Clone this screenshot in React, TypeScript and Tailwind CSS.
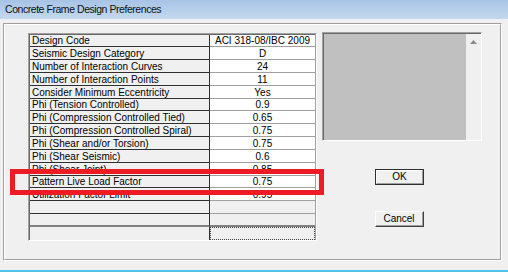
import React from "react";

const rows: [string, string][] = [
  ["Design Code", "ACI 318-08/IBC 2009"],
  ["Seismic Design Category", "D"],
  ["Number of Interaction Curves", "24"],
  ["Number of Interaction Points", "11"],
  ["Consider Minimum Eccentricity", "Yes"],
  ["Phi (Tension Controlled)", "0.9"],
  ["Phi (Compression Controlled Tied)", "0.65"],
  ["Phi (Compression Controlled Spiral)", "0.75"],
  ["Phi (Shear and/or Torsion)", "0.75"],
  ["Phi (Shear Seismic)", "0.6"],
  ["Phi (Shear Joint)", "0.85"],
  ["Pattern Live Load Factor", "0.75"],
  ["Utilization Factor Limit", "0.95"],
  ["", ""],
  ["", ""],
  ["", ""],
];

const short = new Set([0, 5, 11]);

function Row({ label, value, i }: { label: string; value: string; i: number }) {
  const h = short.has(i) ? "h-[12px]" : "h-[13px]";
  const empty = i >= 13;
  const thick = i === 14;
  const last = i === 15;
  const labelBorder = thick
    ? "border-b-2 border-[#808080]"
    : last
    ? ""
    : "border-b border-[#303030]";
  const valueBorder = thick
    ? "border-b-2 border-[#808080]"
    : last
    ? ""
    : "border-b border-[#a0a0a0]";
  return (
    <div className={`flex ${h}`}>
      <div
        className={`w-[180px] shrink-0 bg-[#f0f0f0] border-r border-r-[#303030] ${labelBorder} pl-[2px] flex items-center leading-[11px] whitespace-nowrap overflow-hidden`}
      >
        {label}
      </div>
      <div
        className={`w-[105px] shrink-0 ${empty ? "bg-[#f0f0f0]" : "bg-white"} ${valueBorder} flex items-center justify-center leading-[11px] whitespace-nowrap overflow-hidden`}
      >
        {last ? (
          <div className="w-full h-full border border-dotted border-[#404040]" />
        ) : (
          value
        )}
      </div>
    </div>
  );
}

export default function App() {
  return (
    <div className="w-[508px] h-[272px] bg-[#f0f0f0] relative overflow-hidden flex flex-col text-black text-[10px] font-['Liberation_Sans_Narrow','Liberation_Sans',sans-serif]">
      {/* title bar */}
      <div className="h-[19px] shrink-0 bg-gradient-to-b from-[#a7c3e5] to-[#c4d9ef] flex items-center pl-[5px] text-[#101010] text-[10.5px] font-['Liberation_Sans',sans-serif] tracking-[-0.45px]">
        Concrete Frame Design Preferences
      </div>
      <div className="pt-[4px] px-[3px] shrink-0">
        {/* etched frame */}
        <div className="w-[499px] h-[238px] border-t border-l border-[#a0a0a0] border-b border-r border-b-white border-r-white">
          <div className="w-full h-full border-t border-l border-white border-b border-r border-b-[#a0a0a0] border-r-[#a0a0a0] flex items-start">
            {/* grid */}
            <div className="ml-[23px] mt-[8px] border-t border-l border-[#a0a0a0] border-b border-r border-b-white border-r-white">
              <div className="border-t border-l border-[#696969] border-r border-r-[#a0a0a0]">
                {rows.map(([l, v], i) => (
                  <Row key={i} label={l} value={v} i={i} />
                ))}
              </div>
            </div>
            {/* right column */}
            <div className="ml-[5px] mt-[7px] flex flex-col">
              <div className="w-[160px] h-[109px] border-t border-l border-[#a0a0a0] border-b border-r border-b-white border-r-white">
                <div className="w-full h-full border-t border-l border-[#696969] flex">
                  <div className="flex-1 bg-[#c0c0c0]" />
                  <div className="w-[15px] bg-[#f0f0f0] flex justify-center pt-[6px]">
                    <svg width="7" height="4" viewBox="0 0 7 4">
                      <path d="M3.5 0 L7 4 L0 4 Z" fill="#8a8a8a" />
                    </svg>
                  </div>
                </div>
              </div>
              <div className="ml-[53px] mt-[28px] w-[49px] h-[16px] border border-[#303030] bg-[#f0f0f0]">
                <div className="w-full h-full border-t border-l border-white border-b border-r border-b-[#a0a0a0] border-r-[#a0a0a0] flex items-center justify-center leading-[10px]">
                  OK
                </div>
              </div>
              <div className="ml-[53px] mt-[26px] w-[49px] h-[16px] border-t border-l border-white border-b border-r border-b-[#404040] border-r-[#404040] bg-[#f0f0f0]">
                <div className="w-full h-full border-b border-r border-b-[#a0a0a0] border-r-[#a0a0a0] flex items-center justify-center leading-[10px]">
                  Cancel
                </div>
              </div>
            </div>
          </div>
        </div>
      </div>
      <div className="h-[9px] shrink-0" />
      <div className="h-[2px] shrink-0 bg-[#4fc3e8]" />
      {/* red annotation */}
      <div className="absolute left-[10px] top-[169px] w-[314px] h-[26px] border-[5px] border-[#ed1c24]" />
    </div>
  );
}
